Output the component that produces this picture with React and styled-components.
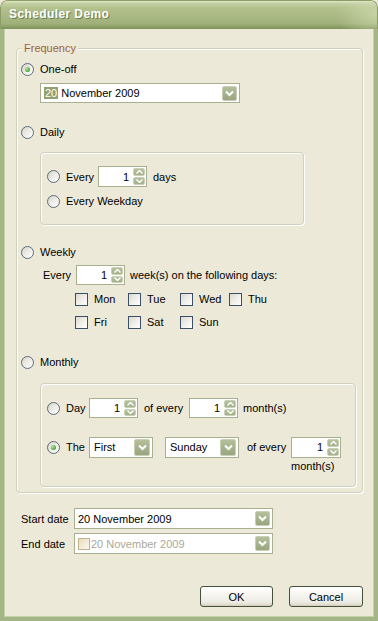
import React from "react";
import styled, { createGlobalStyle } from "styled-components";

const GlobalStyle = createGlobalStyle`
  html, body {
    margin: 0;
    padding: 0;
    background: #ece9d8;
  }
  body {
    font-family: "Liberation Sans", Arial, sans-serif;
    font-size: 11px;
    color: #000;
  }
  * {
    box-sizing: border-box;
  }
`;

const Window = styled.div`
  width: 378px;
  height: 621px;
  display: flex;
  flex-direction: column;
  background: #ece9d8;
  border-radius: 7px 7px 0 0;
  overflow: hidden;
`;

const TitleBar = styled.div`
  height: 29px;
  flex: none;
  display: flex;
  align-items: center;
  padding: 0 0 3px 8px;
  color: #fff;
  font-family: "Liberation Sans", Arial, sans-serif;
  font-weight: bold;
  font-size: 12px;
  letter-spacing: 0.4px;
  text-shadow: 1px 1px 0 #6f7f4c;
  border-radius: 7px 7px 0 0;
  border: 1px solid #8c9e66;
  border-bottom: none;
  background:
    radial-gradient(ellipse 40px 30px at 100% 50%, rgba(220, 230, 190, 0.55), rgba(220, 230, 190, 0) 100%),
    linear-gradient(
      to bottom,
      #e3e9cc 0%,
      #c4d0a3 8%,
      #b3c18d 25%,
      #a9b884 55%,
      #a1b17b 80%,
      #8e9f68 92%,
      #7f915a 100%
    );
`;

const Frame = styled.div`
  flex: 1;
  display: flex;
  flex-direction: column;
  padding: 19px 11px 0 12px;
  border: 4px solid #a4b685;
  border-top: none;
  box-shadow: inset 1px 0 0 #c6d2ab, inset -1px 0 0 #c6d2ab, inset 0 -1px 0 #c6d2ab;
  background: #ece9d8;
`;

const Group = styled.div`
  position: relative;
  border: 1px solid #d0d0bf;
  border-radius: 4px;
  width: ${(p) => (p.$w ? `${p.$w}px` : "auto")};
  margin-top: ${(p) => p.$mt || 0}px;
  margin-left: ${(p) => p.$ml || 0}px;
  padding: ${(p) => p.$pad};
  box-shadow: inset 1px 1px 0 #fff, 1px 1px 0 #fff;
`;

const Legend = styled.span`
  position: absolute;
  top: -8px;
  left: 5px;
  padding: 0 2px;
  background: #ece9d8;
  color: #a0613a;
  line-height: 14px;
`;

const Row = styled.div`
  display: flex;
  align-items: center;
  height: ${(p) => p.$h || 18}px;
  margin-top: ${(p) => p.$mt || 0}px;
  margin-left: ${(p) => p.$ml || 0}px;
  justify-content: ${(p) => p.$justify || "flex-start"};
  gap: ${(p) => p.$gap || 0}px;
`;

const Text = styled.span`
  display: inline-block;
  white-space: nowrap;
  width: ${(p) => (p.$w ? `${p.$w}px` : "auto")};
  margin-left: ${(p) => p.$ml || 0}px;
  color: ${(p) => (p.$disabled ? "#aca899" : "#000")};
`;

const Option = styled.label`
  display: flex;
  align-items: center;
  gap: 6px;
`;

const RadioDot = styled.span`
  flex: none;
  width: 13px;
  height: 13px;
  border-radius: 50%;
  border: 1px solid #5d6b7d;
  background: linear-gradient(135deg, #d6d2c2 0%, #ecebe4 45%, #ffffff 100%);
  display: flex;
  align-items: center;
  justify-content: center;
  &::after {
    content: "";
    width: 5px;
    height: 5px;
    border-radius: 50%;
    background: radial-gradient(circle at 35% 35%, #b9e6a1 0%, #5cb247 55%, #2f8a22 100%);
    display: ${(p) => (p.$checked ? "block" : "none")};
  }
`;

const CheckBox = styled.span`
  flex: none;
  width: 13px;
  height: 13px;
  border: 1px solid #3b5068;
  background: linear-gradient(135deg, #dcdacd 0%, #f1f0ea 55%, #ffffff 100%);
`;

const DaysGrid = styled.div`
  display: grid;
  grid-template-columns: 53px 52px 49px auto;
  row-gap: 7px;
  margin-top: 6px;
  margin-left: 54px;
  & > label {
    height: 16px;
  }
`;

const Field = styled.div`
  flex: none;
  display: flex;
  align-items: center;
  width: ${(p) => p.$w}px;
  height: ${(p) => p.$h || 21}px;
  margin-left: ${(p) => p.$ml || 0}px;
  background: #fff;
  border: 1px solid #a9b08f;
`;

const FieldText = styled.div`
  flex: 1;
  display: flex;
  align-items: center;
  padding-left: ${(p) => p.$pl ?? 3}px;
  padding-right: 4px;
  justify-content: ${(p) => (p.$right ? "flex-end" : "flex-start")};
  color: ${(p) => (p.$disabled ? "#aca899" : "#000")};
  white-space: nowrap;
  overflow: hidden;
`;

const Selected = styled.span`
  background: #93a070;
  color: #fff;
  padding: 0 1px;
  margin-right: 3px;
`;

const DropButton = styled.div`
  flex: none;
  width: ${(p) => p.$w || 15}px;
  height: ${(p) => p.$h || 15}px;
  margin-right: 2px;
  border: 1px solid #c8cfb4;
  border-radius: 2px;
  background: linear-gradient(to bottom, #b4bf9c 0%, #a3b089 60%, #98a57e 100%);
  display: flex;
  align-items: center;
  justify-content: center;
`;

const SpinButtons = styled.div`
  flex: none;
  width: 13px;
  height: 100%;
  display: flex;
  flex-direction: column;
  gap: 1px;
  padding: 1px 1px 1px 0;
`;

const SpinHalf = styled.div`
  flex: 1;
  border: 1px solid #c8cfb4;
  border-radius: 2px;
  background: linear-gradient(to bottom, #b7c2a0 0%, #a3b089 100%);
  display: flex;
  align-items: center;
  justify-content: center;
`;

const TinyCheck = styled.span`
  flex: none;
  width: 12px;
  height: 12px;
  margin-right: 1px;
  border: 1px solid #c2b48c;
  background: linear-gradient(135deg, #e8dcbc 0%, #f4eedd 60%, #fbf8ef 100%);
`;

const Button = styled.button`
  width: ${(p) => p.$w}px;
  height: 21px;
  padding: 0;
  font-family: "Liberation Sans", Arial, sans-serif;
  font-size: 11px;
  color: #000;
  border: 1px solid #44523a;
  border-radius: 3px;
  background: linear-gradient(to bottom, #ffffff 0%, #f6f5f0 40%, #ecebe4 80%, #d9d4c4 100%);
  box-shadow: inset 0 -1px 0 #d6d0bd;
`;

const Chevron = () => (
  <svg width="9" height="7" viewBox="0 0 9 7">
    <path d="M1 1.5 L4.5 5 L8 1.5" fill="none" stroke="#fff" strokeWidth="2" />
  </svg>
);

const Arrow = ({ up }) => (
  <svg width="7" height="4" viewBox="0 0 7 4">
    <path d={up ? "M0.5 3.5 L3.5 0.5 L6.5 3.5" : "M0.5 0.5 L3.5 3.5 L6.5 0.5"} fill="none" stroke="#fff" strokeWidth="1.4" />
  </svg>
);

const Radio = ({ checked, children, w }) => (
  <Option>
    <RadioDot $checked={checked} />
    <Text $w={w}>{children}</Text>
  </Option>
);

const Check = ({ children }) => (
  <Option>
    <CheckBox />
    <Text>{children}</Text>
  </Option>
);

const Spin = ({ w = 49, h = 21, ml, value = 1 }) => (
  <Field $w={w} $h={h} $ml={ml}>
    <FieldText $right>{value}</FieldText>
    <SpinButtons>
      <SpinHalf>
        <Arrow up />
      </SpinHalf>
      <SpinHalf>
        <Arrow />
      </SpinHalf>
    </SpinButtons>
  </Field>
);

const Combo = ({ w, ml, children }) => (
  <Field $w={w} $h={21} $ml={ml}>
    <FieldText $pl={4}>{children}</FieldText>
    <DropButton $w={16} $h={17}>
      <Chevron />
    </DropButton>
  </Field>
);

const DatePicker = ({ w = 199, h = 21, ml, children, disabled }) => (
  <Field $w={w} $h={h} $ml={ml}>
    <FieldText $pl={3} $disabled={disabled}>
      {children}
    </FieldText>
    <DropButton>
      <Chevron />
    </DropButton>
  </Field>
);

export default function App() {
  return (
    <>
      <GlobalStyle />
      <Window>
        <TitleBar>Scheduler Demo</TitleBar>
        <Frame>
          <Group $w={347} $pad="11px 0 5px 4px">
            <Legend>Frequency</Legend>

            <Row>
              <Radio checked>One-off</Radio>
            </Row>
            <Row $mt={5} $h={20}>
              <DatePicker w={200} h={20} ml={19}>
                <Selected>20</Selected>November 2009
              </DatePicker>
            </Row>

            <Row $mt={20}>
              <Radio>Daily</Radio>
            </Row>
            <Group $w={264} $mt={11} $ml={19} $pad="13px 0 14px 6px">
              <Row $h={21}>
                <Radio w={32}>Every</Radio>
                <Spin />
                <Text $ml={6}>days</Text>
              </Row>
              <Row $mt={5}>
                <Radio>Every Weekday</Radio>
              </Row>
            </Group>

            <Row $mt={18}>
              <Radio>Weekly</Radio>
            </Row>
            <Row $mt={4} $h={20} $ml={22}>
              <Text $w={33}>Every</Text>
              <Spin h={20} />
              <Text $ml={5}>week(s) on the following days:</Text>
            </Row>
            <DaysGrid>
              <Check>Mon</Check>
              <Check>Tue</Check>
              <Check>Wed</Check>
              <Check>Thu</Check>
              <Check>Fri</Check>
              <Check>Sat</Check>
              <Check>Sun</Check>
            </DaysGrid>

            <Row $mt={23}>
              <Radio>Monthly</Radio>
            </Row>
            <Group $w={316} $mt={12} $ml={19} $pad="14px 0 13px 6px">
              <Row $h={20}>
                <Radio w={23}>Day</Radio>
                <Spin h={20} />
                <Text $ml={6} $w={45}>of every</Text>
                <Spin h={20} />
                <Text $ml={5}>month(s)</Text>
              </Row>
              <Row $mt={18} $h={22}>
                <Radio checked w={23}>The</Radio>
                <Combo w={64}>First</Combo>
                <Combo w={74} ml={12}>Sunday</Combo>
                <Text $ml={8} $w={44}>of every</Text>
                <Spin w={50} h={21} />
              </Row>
              <Row $mt={1} $h={14} $ml={244}>
                <Text>month(s)</Text>
              </Row>
            </Group>
          </Group>

          <Row $mt={15} $h={21} $ml={5}>
            <Text $w={53}>Start date</Text>
            <DatePicker>20 November 2009</DatePicker>
          </Row>
          <Row $mt={4} $h={21} $ml={5}>
            <Text $w={53}>End date</Text>
            <DatePicker disabled>
              <TinyCheck />
              20 November 2009
            </DatePicker>
          </Row>

          <Row $mt={32} $h={21} $justify="flex-end" $gap={16}>
            <Button $w={73}>OK</Button>
            <Button $w={74}>Cancel</Button>
          </Row>
        </Frame>
      </Window>
    </>
  );
}
